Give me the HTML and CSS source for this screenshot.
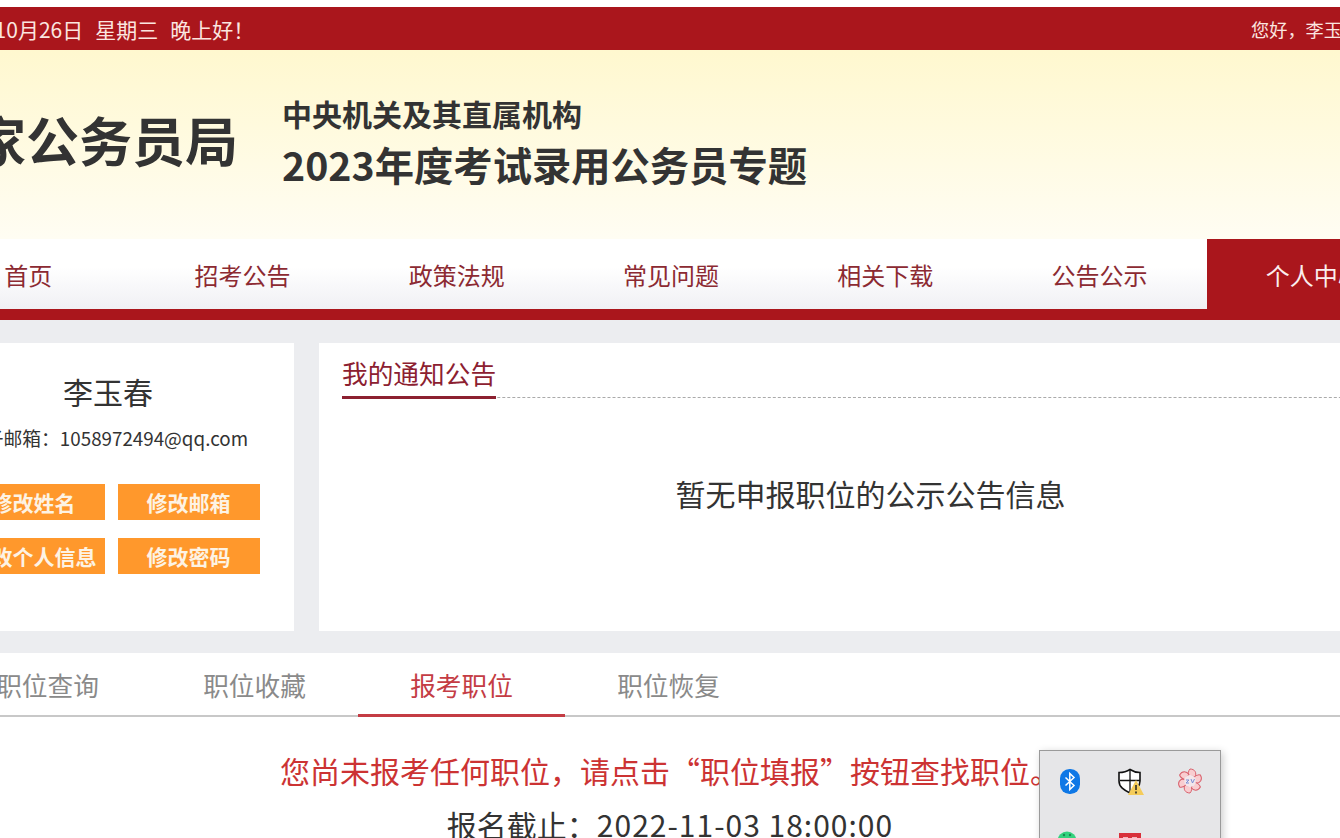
FILE: index.html
```html
<!DOCTYPE html>
<html lang="zh-CN">
<head>
    <meta charset="UTF-8" />
    <title>2023年度考试录用公务员专题</title>
    <link rel="stylesheet" href="styles.css">
</head>
<body>
    <div class="top-bar">
        <div class="container top-inner">
            <div class="top-date">
                <span>2022年10月26日</span>
                <span>星期三</span>
                <span>晚上好&#65281;</span>
            </div>
            <span class="top-user">您好&#65292;李玉春</span>
        </div>
    </div>

    <header class="banner">
        <div class="container banner-inner">
            <div class="logo-text">国家公务员局</div>
            <div class="banner-title">
                <h2>中央机关及其直属机构</h2>
                <h1>2023年度考试录用公务员专题</h1>
            </div>
        </div>
    </header>

    <nav class="navbar">
        <div class="container nav-inner">
            <a href="#">首页</a>
            <a href="#">招考公告</a>
            <a href="#">政策法规</a>
            <a href="#">常见问题</a>
            <a href="#">相关下载</a>
            <a href="#">公告公示</a>
            <a href="#" class="active">个人中心</a>
        </div>
    </nav>

    <main class="content">
        <div class="container panels">
            <section class="user-card">
                <div class="user-name">李玉春</div>
                <div class="user-mail">电子邮箱&#65306;1058972494@qq.com</div>
                <div class="user-buttons">
                    <a href="#">修改姓名</a>
                    <a href="#">修改邮箱</a>
                    <a href="#">修改个人信息</a>
                    <a href="#">修改密码</a>
                </div>
            </section>
            <section class="notice-card">
                <div class="notice-head"><span>我的通知公告</span></div>
                <p class="notice-empty">暂无申报职位的公示公告信息</p>
            </section>
        </div>

        <div class="job-area">
            <div class="tabs">
                <div class="container tabs-inner">
                    <a href="#">职位查询</a>
                    <a href="#">职位收藏</a>
                    <a href="#" class="active">报考职位</a>
                    <a href="#">职位恢复</a>
                </div>
            </div>
            <div class="job-body">
                <p class="job-warning">您尚未报考任何职位&#65292;请点击&#8220;职位填报&#8221;按钮查找职位。</p>
                <p class="job-deadline">报名截止&#65306;<span class="job-time">2022-11-03 18:00:00</span></p>
            </div>
        </div>
    </main>

    <!-- system tray popup on top of the page -->
    <div class="tray">
        <svg class="tray-icon icon-bluetooth" width="22" height="25" viewBox="0 0 22 25">
            <rect x="1" y="0" width="20" height="25" rx="9.5" fill="#0f78e6"/>
            <path d="M6.5 8.5l8.5 8-4.2 4V4.500l4.200 4-8.500 8" fill="none" stroke="#fff" stroke-width="1.5"/>
        </svg>
        <svg class="tray-icon icon-shield" width="28" height="28" viewBox="0 0 28 28">
            <path d="M13 1.500c3 2 6 3 10 3v8.500c0 6-4 9-10 12C7 22 2 19 2 13V4.500c4 0 8-1 11-3z" fill="#fff" stroke="#111" stroke-width="1.6"/>
            <path d="M13 2v22M3 12.500h20" stroke="#111" stroke-width="1.3"/>
            <path d="M19 12l8 15H11z" fill="#f5cc5a"/>
            <path d="M19 17v5M19 23.500v2" stroke="#222" stroke-width="1.5"/>
        </svg>
        <svg class="tray-icon icon-swirl" width="26" height="26" viewBox="0 0 26 26">
            <g fill="#f9cdd0" stroke="#d9606c" stroke-width="1">
                <path d="M13 1c5 0 7 4 5 8-2-1-4-1-6 0-1-3-1-6 1-8z"/>
                <path d="M13 1c5 0 7 4 5 8-2-1-4-1-6 0-1-3-1-6 1-8z" transform="rotate(60 13 13)"/>
                <path d="M13 1c5 0 7 4 5 8-2-1-4-1-6 0-1-3-1-6 1-8z" transform="rotate(120 13 13)"/>
                <path d="M13 1c5 0 7 4 5 8-2-1-4-1-6 0-1-3-1-6 1-8z" transform="rotate(180 13 13)"/>
                <path d="M13 1c5 0 7 4 5 8-2-1-4-1-6 0-1-3-1-6 1-8z" transform="rotate(240 13 13)"/>
                <path d="M13 1c5 0 7 4 5 8-2-1-4-1-6 0-1-3-1-6 1-8z" transform="rotate(300 13 13)"/>
            </g>
            <circle cx="13" cy="13" r="6" fill="#f3e6ea"/>
            <path d="M9 12h3l-3 3h3M14 11l1.500 4 2-4" fill="none" stroke="#7c8fd6" stroke-width="1"/>
        </svg>
        <svg class="tray-icon icon-green" width="20" height="20" viewBox="0 0 20 20">
            <circle cx="10" cy="10" r="9.5" fill="#34d27e"/>
            <circle cx="7" cy="4" r="1.2" fill="#1a8a50"/>
            <circle cx="13" cy="4" r="1.2" fill="#1a8a50"/>
        </svg>
        <svg class="tray-icon icon-red" width="22" height="22" viewBox="0 0 22 22">
            <path d="M0 0h22v16H0z" fill="#d8303a"/>
            <path d="M4 4h5v12H4zM13 4h5v12h-5z" fill="#f0b8bc"/>
        </svg>
    </div>
</body>
</html>
```

FILE: styles.css
```css
html, body {
    height: 838px;
    overflow: hidden;
}
body {
    margin: 0;
    padding-top: 7px;
    box-sizing: border-box;
    position: relative;
    background-color: #ffffff;
    color: #333333;
    font-family: "Noto Sans CJK SC", "Noto Sans", sans-serif;
}
a {
    text-decoration: none;
    color: inherit;
}
p, h1, h2 {
    margin: 0;
}

/* everything hangs off this box, it is wider than the window */
.container {
    width: 1500px;
    margin-left: -78px;
}

.top-bar {
    height: 43px;
    background-color: #aa161c;
    color: #fbe6e0;
}
.top-inner {
    display: flex;
    justify-content: space-between;
    align-items: center;
    height: 100%;
    white-space: nowrap;
}
.top-date {
    display: flex;
    gap: 12px;
    font-size: 21px;
    margin-left: 5px;
}
.top-user {
    font-size: 18.2px;
    width: 171px;
}

.banner {
    height: 189px;
    background: linear-gradient(#fff8cf, #fffdf3);
}
.banner-inner {
    display: flex;
    align-items: flex-start;
    gap: 44px;
}
.logo-text {
    margin-top: 50px;
    margin-left: -2px;
    font-size: 53px;
    line-height: 78px;
    font-weight: 700;
    color: #333333;
    white-space: nowrap;
}
.banner-title {
    padding-top: 42px;
    color: #333333;
    white-space: nowrap;
}
.banner-title h2 {
    font-size: 30px;
    line-height: 42px;
    font-weight: 700;
}
.banner-title h1 {
    font-size: 39.3px;
    line-height: 60px;
    font-weight: 700;
}

.navbar {
    height: 70px;
    background: linear-gradient(#ffffff 40%, #f0f0f4);
    border-bottom: 11px solid #aa161c;
}
.nav-inner {
    display: flex;
    height: 100%;
    margin-left: -79px;
}
.nav-inner a {
    flex: 1;
    display: flex;
    align-items: center;
    justify-content: center;
    font-size: 24px;
    color: #8c2a32;
    white-space: nowrap;
}
.nav-inner a.active {
    background-color: #aa161c;
    color: #fbeeee;
}

.content {
    background-color: #ecedf0;
    padding-top: 23px;
}
.panels {
    display: grid;
    grid-template-columns: 372px 1fr;
    gap: 25px;
    height: 288px;
}
.user-card {
    background-color: #ffffff;
    text-align: center;
    padding-top: 26px;
    box-sizing: border-box;
}
.user-name {
    font-size: 30px;
    line-height: 44px;
}
.user-mail {
    margin-top: 11px;
    padding-right: 2px;
    font-size: 18.8px;
    line-height: 28px;
    color: #333333;
    white-space: nowrap;
}
.user-buttons {
    display: grid;
    grid-template-columns: 142px 142px;
    gap: 18px 13px;
    justify-content: center;
    margin-top: 32px;
    margin-left: 6px;
}
.user-buttons a {
    height: 36px;
    line-height: 36px;
    background-color: #ff982c;
    color: #fdf3e4;
    font-size: 21px;
    font-weight: 700;
    white-space: nowrap;
    overflow: hidden;
}

.notice-card {
    background-color: #ffffff;
    padding: 0 0 0 23px;
}
.notice-head {
    height: 55px;
    border-bottom: 1px dashed #aaaaaa;
    box-sizing: border-box;
    display: flex;
    align-items: flex-end;
}
.notice-head span {
    font-size: 25.7px;
    line-height: 46px;
    color: #8c2030;
    border-bottom: 3px solid #8c2030;
    margin-bottom: -2px;
}
.notice-empty {
    margin-top: 73px;
    margin-left: -23px;
    text-align: center;
    font-size: 30px;
    line-height: 44px;
}

.job-area {
    margin-top: 22px;
    background-color: #ffffff;
    height: 300px;
}
.tabs {
    height: 64px;
    box-sizing: border-box;
    border-bottom: 2px solid #c8c8c8;
}
.tabs-inner {
    display: flex;
    padding-left: 22px;
    box-sizing: border-box;
    height: 64px;
}
.tabs-inner a {
    width: 207px;
    box-sizing: border-box;
    text-align: center;
    font-size: 25.7px;
    line-height: 64px;
    height: 64px;
    color: #8a8a8a;
}
.tabs-inner a.active {
    color: #c43c44;
    border-bottom: 3px solid #c43c44;
}
.job-body {
    text-align: center;
    padding-top: 31px;
    white-space: nowrap;
}
.job-warning {
    font-size: 30px;
    line-height: 44px;
    color: #cc3333;
}
.job-deadline {
    margin-top: 10px;
    font-size: 30px;
    line-height: 44px;
    color: #333333;
}
.job-time {
    letter-spacing: 1px;
}

.tray {
    position: absolute;
    left: 1039px;
    top: 750px;
    width: 180px;
    height: 120px;
    background-color: #e6e6e8;
    border: 1px solid #9a9a9a;
    box-shadow: 2px 2px 8px rgba(0,0,0,0.2);
}
.tray-icon {
    position: absolute;
}
.icon-bluetooth { left: 19px; top: 18px; }
.icon-shield { left: 77px; top: 17px; }
.icon-swirl { left: 137px; top: 17px; }
.icon-green { left: 17px; top: 80px; }
.icon-red { left: 79px; top: 82px; }
```
